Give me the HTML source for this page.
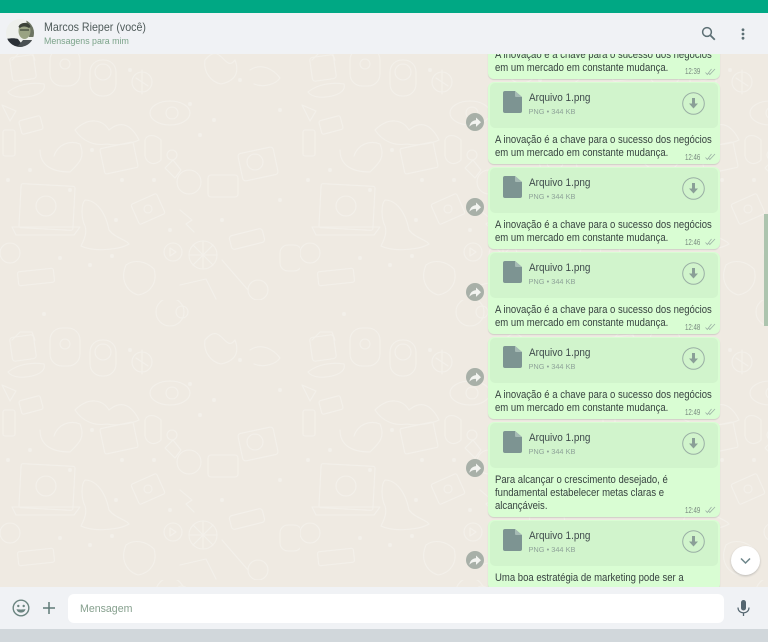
<!DOCTYPE html>
<html lang="pt">
<head>
<meta charset="utf-8">
<title>Marcos Rieper</title>
<style>
html,body{margin:0;padding:0}
body{width:768px;height:642px;overflow:hidden;position:relative;background:#efeae2;font-family:"Liberation Sans",sans-serif;color:#303a3f}
.abs,.b,.p,.t,.h,.f,.n,.s,.tm,.ic,.dl,.fw{position:absolute}
.top{left:0;top:0;width:768px;height:13px;background:#00a884}
.hd{left:0;top:13px;width:768px;height:41px;background:#f0f2f5}
.chat{left:0;top:54px;width:768px;height:533px;background:#efeae2;overflow:hidden}
.ft{left:0;top:587px;width:768px;height:42px;background:#f0f2f5}
.bot{left:0;top:629px;width:768px;height:13px;background:#d1d7db}
.inp{left:68px;top:594px;width:656px;height:29px;background:#fff;border-radius:6px}
.b{left:488px;width:232px;background:#d9fdd3;border-radius:6px;box-shadow:0 1px 1px rgba(11,20,26,.13)}
.p{left:2px;top:1px;width:228px;height:45px;background:#d1f4cc;border-radius:5px}
.t{left:7px;font-size:10.6px;line-height:13px;white-space:nowrap;color:#36413f;filter:blur(.3px);transform:scaleX(.9);transform-origin:0 0}
.h{left:495px;font-size:10.6px;line-height:13px;white-space:nowrap;color:#36413f;filter:blur(.3px);transform:scaleX(.9);transform-origin:0 0}
.n{left:38.5px;top:9px;font-size:10.6px;line-height:13px;color:#3f4a4c;white-space:nowrap;filter:blur(.25px);transform:scaleX(.94);transform-origin:0 0}
.s{left:38.500px;top:24px;font-size:7.4px;line-height:9px;color:#8fa399;white-space:nowrap;filter:blur(.3px)}
.tm{left:197px;font-size:7.8px;line-height:10px;color:#78897f;white-space:nowrap;filter:blur(.3px);transform:scaleX(.78);transform-origin:0 0}
.ic{left:13px;top:8px}
.dl{left:191.500px;top:9px}
.ck{position:absolute;left:217px}
.fw{left:466px;width:18px;height:18px}
.scr{left:764px;top:214px;width:4px;height:112px;background:#adc4ae}
.dn{left:731px;top:546px;width:29px;height:29px;border-radius:50%;background:#fff;box-shadow:0 1px 2px rgba(11,20,26,.22)}
</style>
</head>
<body>
<div class="abs top"></div>

<div class="abs chat">
<svg width="768" height="533" viewBox="0 0 768 533" style="position:absolute;left:0;top:0" fill="none" stroke="#f3f0ea" stroke-width="1.1" stroke-linecap="round" stroke-linejoin="round">
<defs>
<pattern id="d" width="300" height="280" patternUnits="userSpaceOnUse" x="0" y="246">
<rect x="11" y="36" width="24" height="24" rx="3" transform="rotate(-8 23 48)"/>
<path d="M12 40l8-8h12l3 8"/>
<rect x="50" y="28" width="30" height="38" rx="12"/>
<circle cx="65" cy="44" r="5"/>
<path d="M8 72c10-8 24-10 36-8 2 6-4 10-12 12-8 2-20 2-24-4z"/>
<rect x="90" y="40" width="26" height="36" rx="12"/>
<circle cx="103" cy="52" r="8"/>
<circle cx="142" cy="62" r="10"/><path d="M136 58l12 8M142 50v24"/>
<circle cx="170" cy="12" r="14"/><circle cx="182" cy="12" r="6"/>
<path d="M205 40c16-20 20 14 30 0 6 16-4 22-14 24-10-2-18-12-16-24z"/>
<path d="M250 50c12-8 24 0 30 8-4 6-16 10-26 6"/>
<ellipse cx="170" cy="93" rx="20" ry="12"/><circle cx="172" cy="93" r="6"/>
<rect x="20" y="98" width="22" height="14" rx="2" transform="rotate(-15 31 105)"/>
<path d="M75 110c14-14 28-10 34 0 14-12 24-2 30 10-8 4-24 6-32 4-12 2-24-2-32-14z"/>
<path d="M2 85l14 6-6 10z"/>
<rect x="3" y="110" width="12" height="26" rx="2"/>
<path d="M40 130c0 14 10 22 30 22 8-8 16-14 10-28-10-4-22 0-26 12"/>
<rect x="102" y="125" width="34" height="26" rx="2" transform="rotate(-12 119 138)"/>
<path d="M145 120c2-6 10-6 16 0v20c-6 6-14 4-16-4z"/>
<circle cx="172" cy="135" r="5"/><path d="M165 148l8-8 8 10 -6 8z"/>
<circle cx="189" cy="162" r="12"/>
<rect x="208" y="155" width="30" height="22" rx="3"/>
<rect x="240" y="130" width="36" height="28" rx="3" transform="rotate(-12 258 144)"/><circle cx="255" cy="142" r="8"/>
<rect x="20" y="165" width="54" height="44" rx="2" transform="rotate(3 47 187)"/>
<path d="M12 207h68l-6 8H16z"/><circle cx="46" cy="186" r="10"/>
<path d="M85 180c10 0 20 10 24 30 6 8 18 10 20 14-10 6-36 8-48 2 4-8 6-14 4-20-4-8-4-22 0-26z"/>
<rect x="134" y="178" width="28" height="22" rx="2" transform="rotate(-24 148 189)"/><circle cx="148" cy="189" r="4"/>
<path d="M180 190l12 10-6 4 8 8"/>
<rect x="230" y="212" width="34" height="14" rx="3" transform="rotate(-14 247 219)"/>
<circle cx="173" cy="232" r="9"/><path d="M170 228l6 4-6 4z"/>
<circle cx="203" cy="235" r="14"/><path d="M203 221v28M189 235h28M193 225l20 20M213 225l-20 20"/>
<circle cx="10" cy="233" r="10"/>
<rect x="18" y="250" width="36" height="14" rx="2" transform="rotate(-6 36 257)"/>
<path d="M126 245c-6 14 0 26 12 30 12-2 20-12 16-26-8-8-20-10-28-4z"/>
<path d="M180 265l26-6 10 20"/>
<path d="M222 240l26 30"/>
<circle cx="258" cy="270" r="10"/>
<rect x="280" y="225" width="22" height="26" rx="8"/>
<g fill="#f3f0ea" stroke="none">
<circle cx="44" cy="14" r="2"/><circle cx="130" cy="50" r="2"/><circle cx="190" cy="84" r="2"/><circle cx="122" cy="160" r="2"/><circle cx="92" cy="130" r="2"/><circle cx="154" cy="160" r="2"/><circle cx="200" cy="115" r="2"/><circle cx="240" cy="60" r="2"/><circle cx="30" cy="150" r="2"/><circle cx="70" cy="170" r="2"/><circle cx="116" cy="200" r="2"/><circle cx="170" cy="210" r="2"/><circle cx="222" cy="200" r="2"/><circle cx="8" cy="160" r="2"/><circle cx="280" cy="180" r="2"/><circle cx="90" cy="245" r="2"/><circle cx="60" cy="238" r="2"/><circle cx="112" cy="236" r="2"/><circle cx="214" cy="100" r="2"/><circle cx="280" cy="90" r="2"/>
</g>
</pattern>
</defs>
<rect width="768" height="533" fill="url(#d)" stroke="none"/>
</svg>
</div>

<div class="abs scr"></div>

<div class="b" style="top:44px;height:35px"></div>
<div class="h" style="top:49px">A inovação é a chave para o sucesso dos negócios</div>
<div class="h" style="top:62px">em um mercado em constante mudança.</div>
<div class="tm" style="left:685px;top:67px">12:39</div>
<svg class="abs" style="left:705px;top:68px" width="11" height="8" fill="none" stroke="#9bb0a5" stroke-width=".8"><path d="M.5 4.500l1.800 2L6.500 1M3.500 5l1.300 1.500L10 1"/></svg>

<!-- bubble 1 -->
<div class="b" style="top:82px;height:82px"><div class="p">
<svg class="ic" width="19" height="22" viewBox="0 0 19 22"><path d="M2 0h10l7 6v14a2 2 0 0 1-2 2H2a2 2 0 0 1-2-2V2a2 2 0 0 1 2-2z" fill="#7d9492"/><path d="M12 0l7 6h-6a1 1 0 0 1-1-1z" fill="#a6bbb5"/></svg>
<div class="n">Arquivo 1.png</div><div class="s">PNG • 344 KB</div>
<svg class="dl" width="23" height="23" viewBox="0 0 23 23" fill="none"><circle cx="11.5" cy="11.5" r="10.8" stroke="#9aafa5" stroke-width="1"/><path d="M10 6h3v5.5h3l-4.5 5-4.500-5h3z" fill="#8a9f97"/></svg>
</div>
<div class="t" style="top:52px">A inovação é a chave para o sucesso dos negócios</div>
<div class="t" style="top:65px">em um mercado em constante mudança.</div>
<div class="tm" style="left:197px;top:71px">12:46</div>
<svg class="ck" style="top:71px" width="11" height="8" fill="none" stroke="#9bb0a5" stroke-width=".8"><path d="M.5 4.500l1.800 2L6.500 1M3.500 5l1.300 1.500L10 1"/></svg>
</div>

<!-- bubble 2 -->
<div class="b" style="top:167px;height:82px"><div class="p">
<svg class="ic" width="19" height="22" viewBox="0 0 19 22"><path d="M2 0h10l7 6v14a2 2 0 0 1-2 2H2a2 2 0 0 1-2-2V2a2 2 0 0 1 2-2z" fill="#7d9492"/><path d="M12 0l7 6h-6a1 1 0 0 1-1-1z" fill="#a6bbb5"/></svg>
<div class="n">Arquivo 1.png</div><div class="s">PNG • 344 KB</div>
<svg class="dl" width="23" height="23" viewBox="0 0 23 23" fill="none"><circle cx="11.5" cy="11.5" r="10.8" stroke="#9aafa5" stroke-width="1"/><path d="M10 6h3v5.5h3l-4.5 5-4.500-5h3z" fill="#8a9f97"/></svg>
</div>
<div class="t" style="top:52px">A inovação é a chave para o sucesso dos negócios</div>
<div class="t" style="top:65px">em um mercado em constante mudança.</div>
<div class="tm" style="top:71px">12:46</div>
<svg class="ck" style="top:71px" width="11" height="8" fill="none" stroke="#9bb0a5" stroke-width=".8"><path d="M.5 4.500l1.800 2L6.500 1M3.500 5l1.300 1.500L10 1"/></svg>
</div>

<!-- bubble 3 -->
<div class="b" style="top:252px;height:82px"><div class="p">
<svg class="ic" width="19" height="22" viewBox="0 0 19 22"><path d="M2 0h10l7 6v14a2 2 0 0 1-2 2H2a2 2 0 0 1-2-2V2a2 2 0 0 1 2-2z" fill="#7d9492"/><path d="M12 0l7 6h-6a1 1 0 0 1-1-1z" fill="#a6bbb5"/></svg>
<div class="n">Arquivo 1.png</div><div class="s">PNG • 344 KB</div>
<svg class="dl" width="23" height="23" viewBox="0 0 23 23" fill="none"><circle cx="11.5" cy="11.5" r="10.8" stroke="#9aafa5" stroke-width="1"/><path d="M10 6h3v5.5h3l-4.5 5-4.500-5h3z" fill="#8a9f97"/></svg>
</div>
<div class="t" style="top:52px">A inovação é a chave para o sucesso dos negócios</div>
<div class="t" style="top:65px">em um mercado em constante mudança.</div>
<div class="tm" style="top:71px">12:48</div>
<svg class="ck" style="top:71px" width="11" height="8" fill="none" stroke="#9bb0a5" stroke-width=".8"><path d="M.5 4.500l1.800 2L6.500 1M3.500 5l1.300 1.500L10 1"/></svg>
</div>

<!-- bubble 4 -->
<div class="b" style="top:337px;height:82px"><div class="p">
<svg class="ic" width="19" height="22" viewBox="0 0 19 22"><path d="M2 0h10l7 6v14a2 2 0 0 1-2 2H2a2 2 0 0 1-2-2V2a2 2 0 0 1 2-2z" fill="#7d9492"/><path d="M12 0l7 6h-6a1 1 0 0 1-1-1z" fill="#a6bbb5"/></svg>
<div class="n">Arquivo 1.png</div><div class="s">PNG • 344 KB</div>
<svg class="dl" width="23" height="23" viewBox="0 0 23 23" fill="none"><circle cx="11.5" cy="11.5" r="10.8" stroke="#9aafa5" stroke-width="1"/><path d="M10 6h3v5.5h3l-4.5 5-4.500-5h3z" fill="#8a9f97"/></svg>
</div>
<div class="t" style="top:52px">A inovação é a chave para o sucesso dos negócios</div>
<div class="t" style="top:65px">em um mercado em constante mudança.</div>
<div class="tm" style="top:71px">12:49</div>
<svg class="ck" style="top:71px" width="11" height="8" fill="none" stroke="#9bb0a5" stroke-width=".8"><path d="M.5 4.500l1.800 2L6.500 1M3.500 5l1.300 1.500L10 1"/></svg>
</div>

<!-- bubble 5 -->
<div class="b" style="top:422px;height:95px"><div class="p">
<svg class="ic" width="19" height="22" viewBox="0 0 19 22"><path d="M2 0h10l7 6v14a2 2 0 0 1-2 2H2a2 2 0 0 1-2-2V2a2 2 0 0 1 2-2z" fill="#7d9492"/><path d="M12 0l7 6h-6a1 1 0 0 1-1-1z" fill="#a6bbb5"/></svg>
<div class="n">Arquivo 1.png</div><div class="s">PNG • 344 KB</div>
<svg class="dl" width="23" height="23" viewBox="0 0 23 23" fill="none"><circle cx="11.5" cy="11.5" r="10.8" stroke="#9aafa5" stroke-width="1"/><path d="M10 6h3v5.5h3l-4.5 5-4.500-5h3z" fill="#8a9f97"/></svg>
</div>
<div class="t" style="top:52px">Para alcançar o crescimento desejado, é</div>
<div class="t" style="top:65px">fundamental estabelecer metas claras e</div>
<div class="t" style="top:78px">alcançáveis.</div>
<div class="tm" style="top:84px">12:49</div>
<svg class="ck" style="top:84px" width="11" height="8" fill="none" stroke="#9bb0a5" stroke-width=".8"><path d="M.5 4.500l1.800 2L6.500 1M3.500 5l1.300 1.500L10 1"/></svg>
</div>

<!-- bubble 6 -->
<div class="b" style="top:520px;height:70px"><div class="p">
<svg class="ic" width="19" height="22" viewBox="0 0 19 22"><path d="M2 0h10l7 6v14a2 2 0 0 1-2 2H2a2 2 0 0 1-2-2V2a2 2 0 0 1 2-2z" fill="#7d9492"/><path d="M12 0l7 6h-6a1 1 0 0 1-1-1z" fill="#a6bbb5"/></svg>
<div class="n">Arquivo 1.png</div><div class="s">PNG • 344 KB</div>
<svg class="dl" width="23" height="23" viewBox="0 0 23 23" fill="none"><circle cx="11.5" cy="11.5" r="10.8" stroke="#9aafa5" stroke-width="1"/><path d="M10 6h3v5.5h3l-4.5 5-4.500-5h3z" fill="#8a9f97"/></svg>
</div>
<div class="t" style="top:52px">Uma boa estratégia de marketing pode ser a</div>
</div>

<!-- forward buttons -->
<svg class="fw" style="top:113px" viewBox="0 0 18 18"><circle cx="9" cy="9" r="9" fill="#a8b0a8"/><path d="M10 4.500l5 4.700-5 4.700v-3c-3 0-5 .8-6.600 3 .4-3.800 2.600-6.300 6.600-6.800z" fill="#f3f4f1"/></svg>
<svg class="fw" style="top:198px" viewBox="0 0 18 18"><circle cx="9" cy="9" r="9" fill="#a8b0a8"/><path d="M10 4.500l5 4.700-5 4.700v-3c-3 0-5 .8-6.600 3 .4-3.800 2.600-6.300 6.600-6.800z" fill="#f3f4f1"/></svg>
<svg class="fw" style="top:283px" viewBox="0 0 18 18"><circle cx="9" cy="9" r="9" fill="#a8b0a8"/><path d="M10 4.500l5 4.700-5 4.700v-3c-3 0-5 .8-6.600 3 .4-3.800 2.600-6.300 6.600-6.800z" fill="#f3f4f1"/></svg>
<svg class="fw" style="top:368px" viewBox="0 0 18 18"><circle cx="9" cy="9" r="9" fill="#a8b0a8"/><path d="M10 4.500l5 4.700-5 4.700v-3c-3 0-5 .8-6.600 3 .4-3.800 2.600-6.300 6.600-6.800z" fill="#f3f4f1"/></svg>
<svg class="fw" style="top:459px" viewBox="0 0 18 18"><circle cx="9" cy="9" r="9" fill="#a8b0a8"/><path d="M10 4.500l5 4.700-5 4.700v-3c-3 0-5 .8-6.600 3 .4-3.800 2.600-6.300 6.600-6.800z" fill="#f3f4f1"/></svg>
<svg class="fw" style="top:551px" viewBox="0 0 18 18"><circle cx="9" cy="9" r="9" fill="#a8b0a8"/><path d="M10 4.500l5 4.700-5 4.700v-3c-3 0-5 .8-6.600 3 .4-3.800 2.600-6.300 6.600-6.800z" fill="#f3f4f1"/></svg>

<div class="abs dn"><svg width="29" height="29" viewBox="0 0 29 29" fill="none" style="position:absolute;left:0;top:0"><path d="M10 12.500l4.500 4.500 4.500-4.500" stroke="#6c858a" stroke-width="1.500"/></svg></div>

<!-- header -->
<div class="abs hd">
<svg class="abs" style="left:6px;top:6px" width="28" height="28" viewBox="0 0 28 28">
<defs><clipPath id="av"><circle cx="14" cy="14" r="14"/></clipPath></defs>
<g clip-path="url(#av)">
<rect width="28" height="28" fill="#eef0ec"/>
<path d="M0 28v-8c5-1 9-1 12 0l6 8z" fill="#2b3036"/>
<path d="M12 27l5-6h11v7H12z" fill="#4a5052"/>
<path d="M20 0h8v18h-5z" fill="#6c7462"/>
<ellipse cx="18.500" cy="12" rx="6" ry="8" fill="#9aa383"/>
<path d="M12.500 8c1-5 11-6 12 0l-1.500 1c-3-2-7-2-9 0z" fill="#3c4238"/>
<rect x="14" y="10" width="9" height="2" fill="#626b56"/>
</g></svg>
<div class="abs" style="left:44px;top:8px;font-size:11.6px;line-height:14px;color:#4f5b5a;white-space:nowrap;filter:blur(.25px);transform:scaleX(.92);transform-origin:0 0">Marcos Rieper (você)</div>
<div class="abs" style="left:44px;top:23px;font-size:9.2px;line-height:11px;color:#7ba389;white-space:nowrap;filter:blur(.25px);transform:scaleX(.96);transform-origin:0 0">Mensagens para mim</div>
<svg class="abs" style="left:701px;top:13px" width="15" height="15" viewBox="0 0 15 15" fill="none" stroke="#5c6f74"><circle cx="6" cy="6" r="4.400" stroke-width="1.500"/><path d="M9.400 9.400l4.400 4.400" stroke-width="1.800"/></svg>
<svg class="abs" style="left:741px;top:15px" width="4" height="12" viewBox="0 0 4 12" fill="#5c6f74"><circle cx="2" cy="1.800" r="1.400"/><circle cx="2" cy="6" r="1.400"/><circle cx="2" cy="10.200" r="1.400"/></svg>
</div>

<!-- footer -->
<div class="abs ft">
<svg class="abs" style="left:12px;top:12px" width="18" height="18" viewBox="0 0 18 18" fill="none"><circle cx="9" cy="9" r="7.800" stroke="#6b8580" stroke-width="1.400"/><circle cx="6.300" cy="7" r="1.200" fill="#6b8580"/><circle cx="11.700" cy="7" r="1.200" fill="#6b8580"/><path d="M4.500 10c1 .6 8 .6 9 0-.5 2.400-2.200 3.600-4.500 3.600S5 12.400 4.500 10z" fill="#6b8580"/></svg>
<svg class="abs" style="left:43px;top:15px" width="12" height="12" viewBox="0 0 12 12" fill="none" stroke="#5f7a77" stroke-width="1.500"><path d="M6 0v12M0 6h12"/></svg>
</div>
<div class="abs inp"></div>
<div class="abs" style="left:80px;top:603px;font-size:10.6px;line-height:13px;color:#86a08e;white-space:nowrap;filter:blur(.25px)">Mensagem</div>
<svg class="abs" style="left:737px;top:600px" width="13" height="17" viewBox="0 0 13 17" fill="none"><rect x="4" y="0" width="5" height="10.500" rx="2.500" fill="#54656f"/><path d="M1 7.500c0 3.400 2.400 5.300 5.500 5.300S12 10.900 12 7.500" stroke="#54656f" stroke-width="1.200"/><path d="M6.500 12.800V16" stroke="#54656f" stroke-width="1.300"/></svg>
<div class="abs bot"></div>
</body>
</html>
